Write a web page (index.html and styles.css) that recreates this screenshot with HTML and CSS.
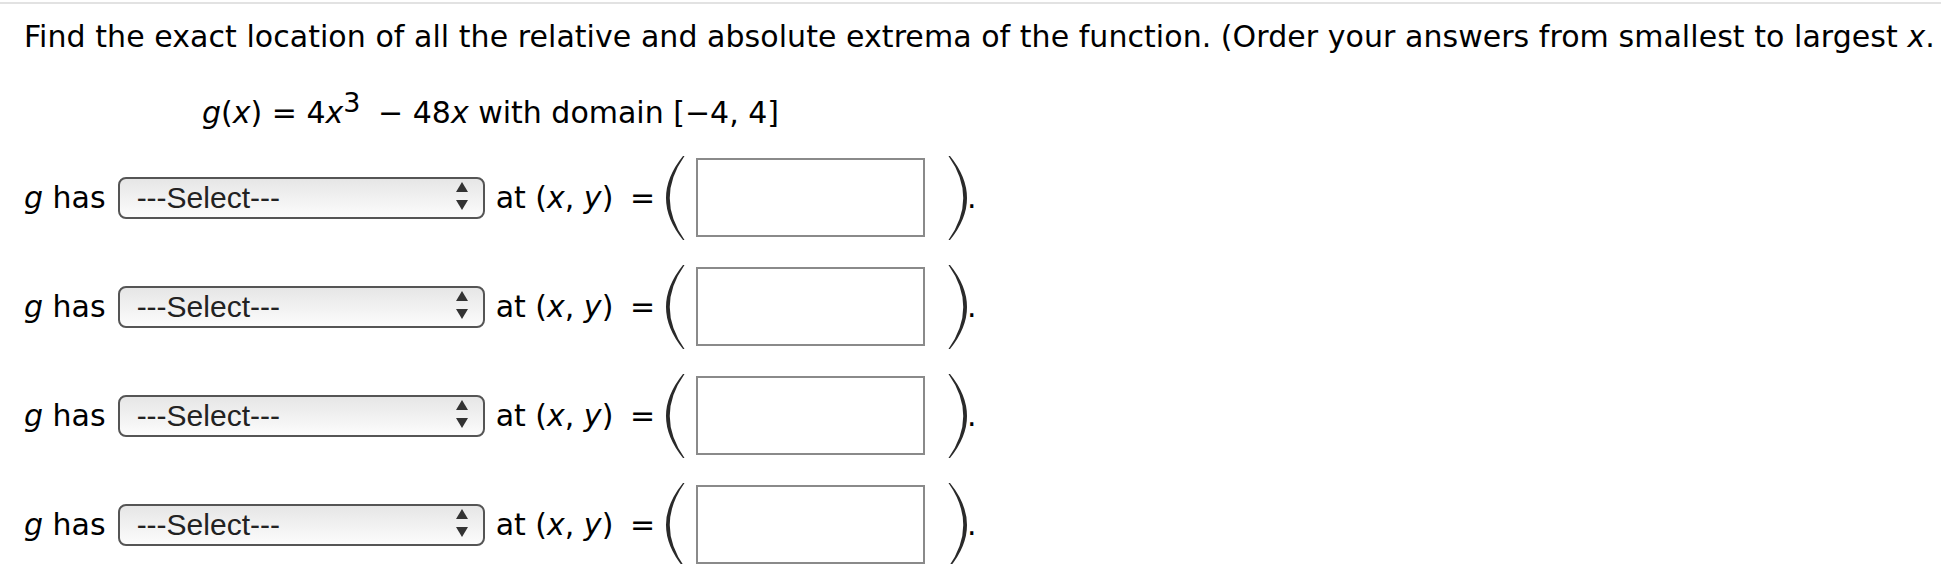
FILE: index.html
```html
<!DOCTYPE html>
<html>
<head>
<meta charset="utf-8">
<title>Extrema</title>
<link rel="stylesheet" href="styles.css">
</head>
<body>
<div class="page">
  <p class="prompt">Find the exact location of all the relative and absolute extrema of the function. (Order your answers from smallest to largest <i>x</i>.</p>
  <p class="formula"><i>g</i>(<i>x</i>) = 4<i>x</i><sup>3</sup> − 48<i>x</i> with domain [−4, 4]</p>

  <div class="row">
    <span class="label"><i>g</i> has</span>
    <span class="select-wrap">
      <select class="select"><option>---Select---</option></select>
      <svg class="arrows" viewBox="0 0 12 28" width="12" height="28"><polygon points="0,10 6,0 12,10"/><polygon points="0,18 12,18 6,28"/></svg>
    </span>
    <span class="at">at (<i>x</i>, <i>y</i>) <span class="eq">=</span></span>
    <svg class="paren" viewBox="0 0 24 86" width="24" height="86"><path d="M19,1 Q-15,43 19,85 L20.5,85 Q-9,43 20.5,1 Z"/></svg>
    <input class="answer" type="text">
    <svg class="paren paren-r" viewBox="0 0 24 86" width="24" height="86"><path d="M5,1 Q39,43 5,85 L3.5,85 Q33,43 3.5,1 Z"/></svg>
    <span class="dot">.</span>
  </div>

  <div class="row">
    <span class="label"><i>g</i> has</span>
    <span class="select-wrap">
      <select class="select"><option>---Select---</option></select>
      <svg class="arrows" viewBox="0 0 12 28" width="12" height="28"><polygon points="0,10 6,0 12,10"/><polygon points="0,18 12,18 6,28"/></svg>
    </span>
    <span class="at">at (<i>x</i>, <i>y</i>) <span class="eq">=</span></span>
    <svg class="paren" viewBox="0 0 24 86" width="24" height="86"><path d="M19,1 Q-15,43 19,85 L20.5,85 Q-9,43 20.5,1 Z"/></svg>
    <input class="answer" type="text">
    <svg class="paren paren-r" viewBox="0 0 24 86" width="24" height="86"><path d="M5,1 Q39,43 5,85 L3.5,85 Q33,43 3.5,1 Z"/></svg>
    <span class="dot">.</span>
  </div>

  <div class="row">
    <span class="label"><i>g</i> has</span>
    <span class="select-wrap">
      <select class="select"><option>---Select---</option></select>
      <svg class="arrows" viewBox="0 0 12 28" width="12" height="28"><polygon points="0,10 6,0 12,10"/><polygon points="0,18 12,18 6,28"/></svg>
    </span>
    <span class="at">at (<i>x</i>, <i>y</i>) <span class="eq">=</span></span>
    <svg class="paren" viewBox="0 0 24 86" width="24" height="86"><path d="M19,1 Q-15,43 19,85 L20.5,85 Q-9,43 20.5,1 Z"/></svg>
    <input class="answer" type="text">
    <svg class="paren paren-r" viewBox="0 0 24 86" width="24" height="86"><path d="M5,1 Q39,43 5,85 L3.5,85 Q33,43 3.5,1 Z"/></svg>
    <span class="dot">.</span>
  </div>

  <div class="row">
    <span class="label"><i>g</i> has</span>
    <span class="select-wrap">
      <select class="select"><option>---Select---</option></select>
      <svg class="arrows" viewBox="0 0 12 28" width="12" height="28"><polygon points="0,10 6,0 12,10"/><polygon points="0,18 12,18 6,28"/></svg>
    </span>
    <span class="at">at (<i>x</i>, <i>y</i>) <span class="eq">=</span></span>
    <svg class="paren" viewBox="0 0 24 86" width="24" height="86"><path d="M19,1 Q-15,43 19,85 L20.5,85 Q-9,43 20.5,1 Z"/></svg>
    <input class="answer" type="text">
    <svg class="paren paren-r" viewBox="0 0 24 86" width="24" height="86"><path d="M5,1 Q39,43 5,85 L3.5,85 Q33,43 3.5,1 Z"/></svg>
    <span class="dot">.</span>
  </div>
</div>
</body>
</html>
```

FILE: styles.css
```css
html, body {
  margin: 0;
  padding: 0;
  background: #fff;
}
body {
  overflow: hidden;
  font-family: "DejaVu Sans", Verdana, sans-serif;
  font-size: 30px;
  color: #000;
}
.page {
  margin-top: 2px;
  border-top: 2px solid #e2e2e2;
}
.prompt {
  margin: 15px 0 0 0;
  padding-left: 24px;
  line-height: 36px;
  white-space: nowrap;
  letter-spacing: 0.05px;
}
.formula {
  margin: 40px 0 0 0;
  padding-left: 202px;
  line-height: 36px;
  white-space: nowrap;
}
.formula sup {
  font-size: 27px;
  line-height: 0;
  vertical-align: 11px;
  margin-right: 8px;
}
.row {
  display: flex;
  align-items: center;
  height: 109px;
  padding-left: 24px;
  line-height: 36px;
  white-space: nowrap;
}
.row:first-of-type {
  margin-top: 12px;
}
.label {
  flex: none;
}
.select-wrap {
  position: relative;
  display: flex;
  flex: none;
  margin-left: 12px;
}
.select {
  -webkit-appearance: none;
  appearance: none;
  box-sizing: border-box;
  width: 367px;
  height: 42px;
  margin: 0;
  padding: 0 0 0 17px;
  border: 2px solid #555;
  border-radius: 8px;
  background: linear-gradient(to bottom, #e6e6e6 0%, #f2f2f2 55%, #fcfcfc 100%);
  font-family: "Liberation Sans", Arial, sans-serif;
  font-size: 30px;
  color: #222;
  outline: none;
}
.arrows {
  position: absolute;
  right: 17px;
  top: 5px;
  fill: #333;
  pointer-events: none;
}
.at {
  flex: none;
  margin-left: 11px;
}
.eq {
  margin-left: 7px;
}
.paren {
  flex: none;
  display: block;
  margin-left: 9px;
  fill: #2a2a2a;
}
.answer {
  flex: none;
  box-sizing: border-box;
  width: 229px;
  height: 79px;
  margin: 0 0 0 8px;
  padding: 0;
  border: 2px solid #8a8a8a;
  border-radius: 0;
  background: #fff;
  outline: none;
}
.paren-r {
  margin-left: 20px;
}
.dot {
  flex: none;
  margin-left: -2px;
}
```
